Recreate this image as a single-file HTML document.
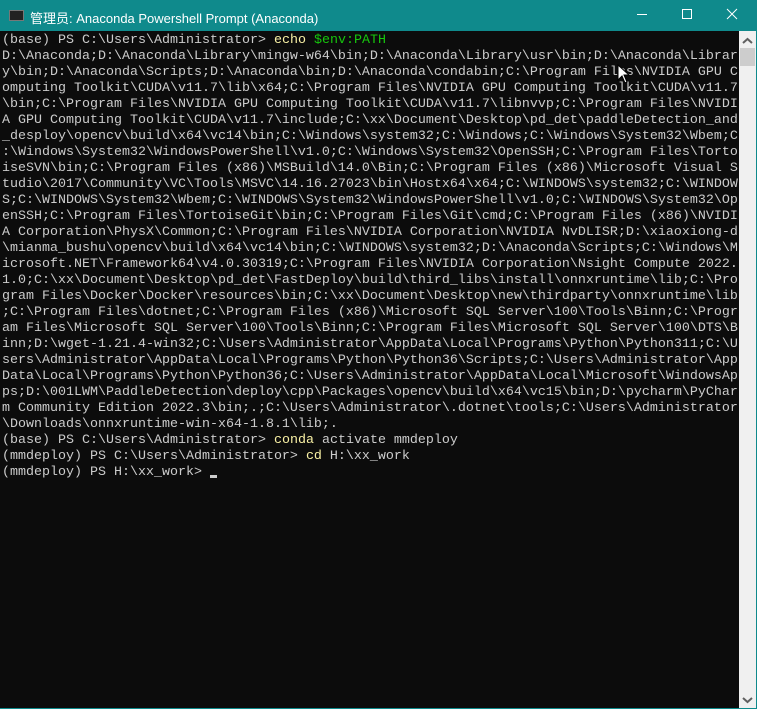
<!DOCTYPE html>
<html><head><meta charset="utf-8"><style>
html,body{margin:0;padding:0;width:757px;height:709px;overflow:hidden;background:#0c0c0c}
.tb{position:absolute;left:0;top:0;width:757px;height:31px;background:#0f8a8c;color:#fff;font:13px "Liberation Sans","Noto Sans CJK SC",sans-serif}
.tb .t{position:absolute;left:30px;top:8px}
.ic{position:absolute;left:9px;top:10px;width:15px;height:11px;background:#222;border:1px solid #777;box-sizing:border-box}
.b{position:absolute;top:0;height:31px;width:46px;text-align:center;line-height:31px}
.term{position:absolute;left:2px;top:33px;width:737px;height:676px;font:13.33px/16px "Liberation Mono","Noto Sans CJK SC",monospace;color:#cccccc;white-space:pre;letter-spacing:0}
.y{color:#f9f1a5}.g{color:#16c60c}
.sb{position:absolute;left:739px;top:31px;width:17px;height:677px;background:#f0f0f0}
.th{position:absolute;left:740px;top:48px;width:15px;height:18px;background:#cdcdcd}
.bd{position:absolute;left:756px;top:31px;width:1px;height:678px;background:#0f8a8c}
.bb{position:absolute;left:0;top:708px;width:757px;height:1px;background:#0f8a8c}
.cur{position:absolute;left:210px;top:475px;width:7px;height:3px;background:#ccc}
</style></head><body>
<div class="tb"><div class="ic"></div><span class="t">管理员: Anaconda Powershell Prompt (Anaconda)</span>
<div class="b" style="left:619px"><svg width="12" height="12"><line x1="1" y1="6.5" x2="11" y2="6.5" stroke="#fff"/></svg></div>
<div class="b" style="left:664px"><svg width="12" height="12"><rect x="1.5" y="1.5" width="9" height="9" fill="none" stroke="#fff"/></svg></div>
<div class="b" style="left:709px"><svg width="12" height="12"><path d="M1 1L11 11M11 1L1 11" stroke="#fff"/></svg></div>
</div>
<div class="term">(base) PS C:\Users\Administrator&gt; <span class="y">echo</span> <span class="g">$env:PATH</span>
D:\Anaconda;D:\Anaconda\Library\mingw-w64\bin;D:\Anaconda\Library\usr\bin;D:\Anaconda\Librar
y\bin;D:\Anaconda\Scripts;D:\Anaconda\bin;D:\Anaconda\condabin;C:\Program Files\NVIDIA GPU C
omputing Toolkit\CUDA\v11.7\lib\x64;C:\Program Files\NVIDIA GPU Computing Toolkit\CUDA\v11.7
\bin;C:\Program Files\NVIDIA GPU Computing Toolkit\CUDA\v11.7\libnvvp;C:\Program Files\NVIDI
A GPU Computing Toolkit\CUDA\v11.7\include;C:\xx\Document\Desktop\pd_det\paddleDetection_and
_desploy\opencv\build\x64\vc14\bin;C:\Windows\system32;C:\Windows;C:\Windows\System32\Wbem;C
:\Windows\System32\WindowsPowerShell\v1.0;C:\Windows\System32\OpenSSH;C:\Program Files\Torto
iseSVN\bin;C:\Program Files (x86)\MSBuild\14.0\Bin;C:\Program Files (x86)\Microsoft Visual S
tudio\2017\Community\VC\Tools\MSVC\14.16.27023\bin\Hostx64\x64;C:\WINDOWS\system32;C:\WINDOW
S;C:\WINDOWS\System32\Wbem;C:\WINDOWS\System32\WindowsPowerShell\v1.0;C:\WINDOWS\System32\Op
enSSH;C:\Program Files\TortoiseGit\bin;C:\Program Files\Git\cmd;C:\Program Files (x86)\NVIDI
A Corporation\PhysX\Common;C:\Program Files\NVIDIA Corporation\NVIDIA NvDLISR;D:\xiaoxiong-d
\mianma_bushu\opencv\build\x64\vc14\bin;C:\WINDOWS\system32;D:\Anaconda\Scripts;C:\Windows\M
icrosoft.NET\Framework64\v4.0.30319;C:\Program Files\NVIDIA Corporation\Nsight Compute 2022.
1.0;C:\xx\Document\Desktop\pd_det\FastDeploy\build\third_libs\install\onnxruntime\lib;C:\Pro
gram Files\Docker\Docker\resources\bin;C:\xx\Document\Desktop\new\thirdparty\onnxruntime\lib
;C:\Program Files\dotnet;C:\Program Files (x86)\Microsoft SQL Server\100\Tools\Binn;C:\Progr
am Files\Microsoft SQL Server\100\Tools\Binn;C:\Program Files\Microsoft SQL Server\100\DTS\B
inn;D:\wget-1.21.4-win32;C:\Users\Administrator\AppData\Local\Programs\Python\Python311;C:\U
sers\Administrator\AppData\Local\Programs\Python\Python36\Scripts;C:\Users\Administrator\App
Data\Local\Programs\Python\Python36;C:\Users\Administrator\AppData\Local\Microsoft\WindowsAp
ps;D:\001LWM\PaddleDetection\deploy\cpp\Packages\opencv\build\x64\vc15\bin;D:\pycharm\PyChar
m Community Edition 2022.3\bin;.;C:\Users\Administrator\.dotnet\tools;C:\Users\Administrator
\Downloads\onnxruntime-win-x64-1.8.1\lib;.
(base) PS C:\Users\Administrator&gt; <span class="y">conda</span> activate mmdeploy
(mmdeploy) PS C:\Users\Administrator&gt; <span class="y">cd</span> H:\xx_work
(mmdeploy) PS H:\xx_work&gt; </div>
<div class="cur"></div>
<svg style="position:absolute;left:617px;top:64px" width="14" height="20"><path d="M1 1L1 16L5 12L8 19L10 18L7 11L12 11Z" fill="#fff" stroke="#000" stroke-width="1"/></svg>
<div class="sb"></div><div class="th"></div>
<svg style="position:absolute;left:742px;top:37px" width="11" height="8"><path d="M1 6L5.5 2L10 6" stroke="#606060" stroke-width="2" fill="none"/></svg>
<svg style="position:absolute;left:742px;top:696px" width="11" height="8"><path d="M1 2L5.5 6L10 2" stroke="#606060" stroke-width="2" fill="none"/></svg>
<div class="bd"></div><div class="bb"></div>
</body></html>
